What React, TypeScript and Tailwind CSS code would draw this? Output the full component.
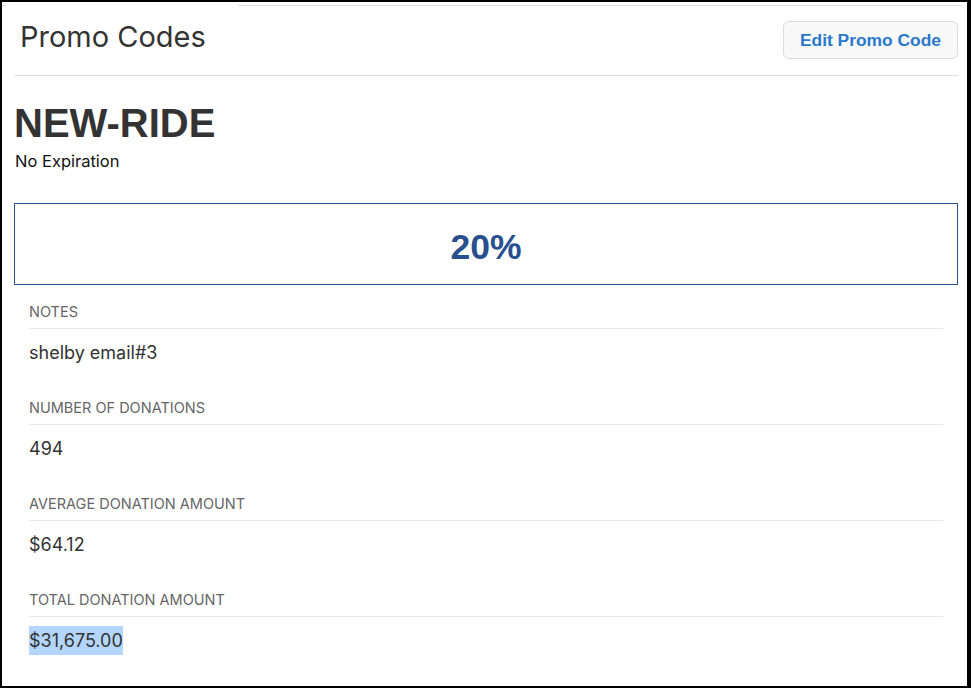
import React from "react";

const rows = [
  { label: "Notes", value: "shelby email#3" },
  { label: "Number of Donations", value: "494" },
  { label: "Average Donation Amount", value: "$64.12" },
  { label: "Total Donation Amount", value: "$31,675.00", selected: true },
];

export default function App() {
  return (
    <div className="w-[971px] h-[688px] box-border border-black border-t-2 border-l-2 border-r-4 border-b-2 bg-white overflow-hidden font-['Inter',sans-serif]">
      <div className="flex h-px mt-[3px]">
        <div className="w-1 bg-[#dedede]" />
        <div className="flex-1 ml-[232px] mr-[5px] bg-[#dedede]" />
      </div>
      <div className="pl-3 pr-[9px]">
        <div className="flex justify-between items-start pt-[15px] pb-4 border-b border-[#dcdcdc]">
          <h1 className="mt-px pl-1.5 text-[29px] leading-[29px] font-normal text-[#333]">Promo Codes</h1>
          <button className="h-[38px] px-4 rounded-md border border-[#dcdcdc] bg-[#f9f9f9] text-[#2a78cc] font-bold text-[17.4px] font-['Liberation_Sans',Arial,sans-serif]">
            Edit Promo Code
          </button>
        </div>
        <h2 className="mt-[27px] text-[40px] leading-[40px] font-bold text-[#333] font-['Liberation_Sans',Arial,sans-serif]">
          NEW-RIDE
        </h2>
        <p className="mt-2 ml-px text-[16.5px] leading-5 text-[#111]">No Expiration</p>
        <div className="mt-8 h-[82px] border border-[#2b5391] flex items-center justify-center pt-[7px]">
          <span className="text-[35.5px] font-bold text-[#28508f] font-['Liberation_Sans',Arial,sans-serif]">20%</span>
        </div>
        <div className="mt-[17px] px-[15px] flex flex-col gap-[31px]">
          {rows.map((r) => (
            <div key={r.label}>
              <div className="pb-[6px] border-b border-[#e9e9e9] text-[14.5px] leading-5 uppercase text-[#666]">
                {r.label}
              </div>
              <div className="mt-[9px] text-[18px] leading-[29px] text-[#333]">
                {r.selected ? (
                  <span className="inline-block bg-[#b4d5fe]">{r.value}</span>
                ) : (
                  r.value
                )}
              </div>
            </div>
          ))}
        </div>
      </div>
    </div>
  );
}
